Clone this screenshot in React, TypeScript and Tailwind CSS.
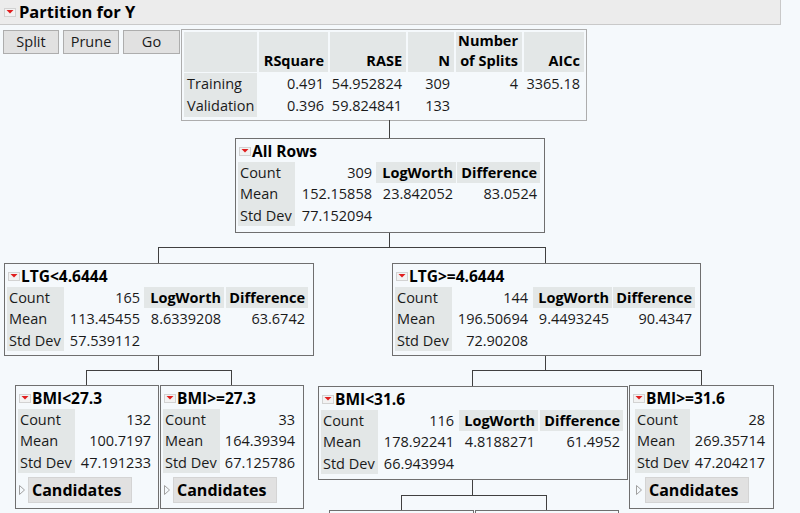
import React from "react";

const CELL = "bg-[#e3e7e7]";

function RedTri() {
  return (
    <svg width="12" height="9" viewBox="0 0 12 9" className="shrink-0">
      <rect x="0.5" y="0.5" width="11" height="8" fill="#f2f2f2" stroke="#d2d2d2" />
      <polygon points="2.5,2 9.5,2 6,5.5" fill="#e01e1e" />
    </svg>
  );
}

type Split = { lwCls: string; dfCls: string; lw: string; df: string };

type NodeP = {
  pos: string;
  pad: string;
  title: string;
  count: string;
  mean: string;
  sd: string;
  lab: string;
  val: string;
  split?: Split;
  cand?: boolean;
};

function Node(p: NodeP) {
  const rows: [string, string][] = [
    ["Count", p.count],
    ["Mean", p.mean],
    ["Std Dev", p.sd],
  ];
  return (
    <div className={`absolute border border-[#6f6f6f] bg-[#f5f9fc] ${p.pos}`}>
      <div className="flex items-center h-[23px] pl-[3px] pt-[2px]">
        <RedTri />
        <span className="ml-[1px] font-bold text-[15.5px] leading-none text-black whitespace-nowrap">{p.title}</span>
      </div>
      <div className={p.pad}>
        {rows.map(([l, v], i) => (
          <div
            key={l}
            className={`flex ${i === 1 ? "h-[22px]" : "h-[21px]"} leading-[22px] text-[14.5px] whitespace-nowrap`}
          >
            <div className={`${p.lab} ${CELL} pl-[2px]`}>{l}</div>
            <div className={`${p.val} text-right pr-[1px]`}>{v}</div>
            {p.split && i === 0 && (
              <>
                <div className={`${p.split.lwCls} ${CELL} text-right pr-[3px] font-bold text-black`}>LogWorth</div>
                <div className={`${p.split.dfCls} ${CELL} text-right pr-[3px] font-bold text-black`}>Difference</div>
              </>
            )}
            {p.split && i === 1 && (
              <>
                <div className={`${p.split.lwCls} text-right pr-[3px]`}>{p.split.lw}</div>
                <div className={`${p.split.dfCls} text-right pr-[3px]`}>{p.split.df}</div>
              </>
            )}
          </div>
        ))}
      </div>
      {p.cand && (
        <div className={`flex items-center mt-[4px] ${p.pad}`}>
          <svg width="8" height="12" viewBox="0 0 8 12" className="shrink-0">
            <polygon points="1.5,1.5 6.5,6 1.5,10.5" fill="none" stroke="#a0a0a0" />
          </svg>
          <div className="ml-[2px] w-[104px] h-[26px] bg-[#e1e1e1] border border-[#d4d4d4] pl-[3px] font-bold text-[16px] leading-[24px] text-black">
            Candidates
          </div>
        </div>
      )}
    </div>
  );
}

function Btn({ label, w }: { label: string; w: string }) {
  return (
    <div
      className={`${w} h-[24px] bg-[#e1e1e1] border border-[#adadad] flex items-center justify-center text-[14.5px] text-[#1a1a1a]`}
    >
      {label}
    </div>
  );
}

function StatsTable() {
  const hd = `${CELL} flex flex-col justify-end items-end pr-[4px] pb-[1px] font-bold text-black leading-[20px]`;
  const dc = "text-right pr-[4px] leading-[22px]";
  return (
    <div className="ml-[1px] w-[406px] h-[92px] border border-[#adadad] pt-[2px] pl-[2px] text-[14.5px]">
      <div className="grid grid-cols-[73px_69px_76px_46px_66px_60px] gap-x-[2px] grid-rows-[41px_22px_22px] gap-y-0">
        <div className={`${CELL} mb-[1px]`}></div>
        <div className={`${hd} mb-[1px]`}>RSquare</div>
        <div className={`${hd} mb-[1px]`}>RASE</div>
        <div className={`${hd} mb-[1px]`}>N</div>
        <div className={`${hd} mb-[1px] items-center`}>
          <span>Number</span>
          <span>of Splits</span>
        </div>
        <div className={`${hd} mb-[1px]`}>AICc</div>

        <div className={`${CELL} pl-[3px] leading-[22px]`}>Training</div>
        <div className={dc}>0.491</div>
        <div className={dc}>54.952824</div>
        <div className={dc}>309</div>
        <div className={dc}>4</div>
        <div className={dc}>3365.18</div>

        <div className={`${CELL} pl-[3px] leading-[22px]`}>Validation</div>
        <div className={dc}>0.396</div>
        <div className={dc}>59.824841</div>
        <div className={dc}>133</div>
        <div className={dc}></div>
        <div className={dc}></div>
      </div>
    </div>
  );
}

function Lines() {
  const c = "#404040";
  const segs: [number, number, number, number][] = [
    [389.5, 120, 389.5, 138],
    [389.5, 233, 389.5, 247.5],
    [158, 247.5, 546, 247.5],
    [158.5, 247, 158.5, 263],
    [545.5, 247, 545.5, 263],
    [158.5, 355, 158.5, 370.5],
    [86, 370.5, 232, 370.5],
    [86.5, 370, 86.5, 385],
    [231.5, 370, 231.5, 385],
    [545.5, 355, 545.5, 370.5],
    [472, 370.5, 702, 370.5],
    [472.5, 370, 472.5, 386],
    [701.5, 370, 701.5, 385],
    [472.5, 480, 472.5, 495.5],
    [401, 495.5, 547, 495.5],
    [401.5, 495, 401.5, 510],
    [546.5, 495, 546.5, 510],
  ];
  return (
    <svg className="absolute left-0 top-0 pointer-events-none" width="800" height="513">
      {segs.map(([x1, y1, x2, y2], i) => (
        <line key={i} x1={x1} y1={y1} x2={x2} y2={y2} stroke={c} strokeWidth="1" />
      ))}
    </svg>
  );
}

export default function App() {
  return (
    <div className="relative w-[800px] h-[513px] overflow-hidden bg-[#f5f9fc] font-['Open_Sans',sans-serif] text-[#1a1a1a]">
      <div className="w-[781px] h-[25px] bg-[#ececec] border-b border-r border-[#c9c9c9] flex items-center pl-[4px]">
        <RedTri />
        <span className="ml-[3px] font-bold text-[16.5px] leading-none text-black">Partition for Y</span>
      </div>

      <div className="flex items-start mt-[4px] pl-[3px]">
        <div className="flex gap-x-[4px] mt-[1px]">
          <Btn label="Split" w="w-[56px]" />
          <Btn label="Prune" w="w-[56px]" />
          <Btn label="Go" w="w-[57px]" />
        </div>
        <StatsTable />
      </div>

      <Lines />

      <Node
        pos="left-[235px] top-[138px] w-[310px] h-[95px]"
        pad="pl-[2px]"
        title="All Rows"
        count="309"
        mean="152.15858"
        sd="77.152094"
        lab="w-[57px]"
        val="w-[78px]"
        split={{ lwCls: "ml-[3px] w-[80px]", dfCls: "ml-[1px] w-[83px]", lw: "23.842052", df: "83.0524" }}
      />

      <Node
        pos="left-[4px] top-[263px] w-[310px] h-[93px]"
        pad="pl-[2px]"
        title="LTG<4.6444"
        count="165"
        mean="113.45455"
        sd="57.539112"
        lab="w-[57px]"
        val="w-[77px]"
        split={{ lwCls: "ml-[3px] w-[80px]", dfCls: "ml-[2px] w-[82px]", lw: "8.6339208", df: "63.6742" }}
      />

      <Node
        pos="left-[392px] top-[263px] w-[309px] h-[93px]"
        pad="pl-[2px]"
        title="LTG>=4.6444"
        count="144"
        mean="196.50694"
        sd="72.90208"
        lab="w-[57px]"
        val="w-[77px]"
        split={{ lwCls: "ml-[4px] w-[79px]", dfCls: "ml-[1px] w-[82px]", lw: "9.4493245", df: "90.4347" }}
      />

      <Node
        pos="left-[15px] top-[385px] w-[144px] h-[124px]"
        pad="pl-[2px]"
        title="BMI<27.3"
        count="132"
        mean="100.7197"
        sd="47.191233"
        lab="w-[57px]"
        val="w-[77px]"
        cand
      />

      <Node
        pos="left-[160px] top-[385px] w-[144px] h-[124px]"
        pad="pl-[2px]"
        title="BMI>=27.3"
        count="33"
        mean="164.39394"
        sd="67.125786"
        lab="w-[57px]"
        val="w-[76px]"
        cand
      />

      <Node
        pos="left-[318px] top-[386px] w-[310px] h-[94px]"
        pad="pl-[2px]"
        title="BMI<31.6"
        count="116"
        mean="178.92241"
        sd="66.943994"
        lab="w-[57px]"
        val="w-[77px]"
        split={{ lwCls: "ml-[4px] w-[79px]", dfCls: "ml-[2px] w-[83px]", lw: "4.8188271", df: "61.4952" }}
      />

      <Node
        pos="left-[629px] top-[385px] w-[145px] h-[124px]"
        pad="pl-[5px]"
        title="BMI>=31.6"
        count="28"
        mean="269.35714"
        sd="47.204217"
        lab="w-[55px]"
        val="w-[76px]"
        cand
      />

      <div className="absolute left-[329px] top-[510px] w-[145px] h-[40px] border border-[#6f6f6f] bg-[#f5f9fc]"></div>
      <div className="absolute left-[475px] top-[510px] w-[144px] h-[40px] border border-[#6f6f6f] bg-[#f5f9fc]"></div>
    </div>
  );
}
